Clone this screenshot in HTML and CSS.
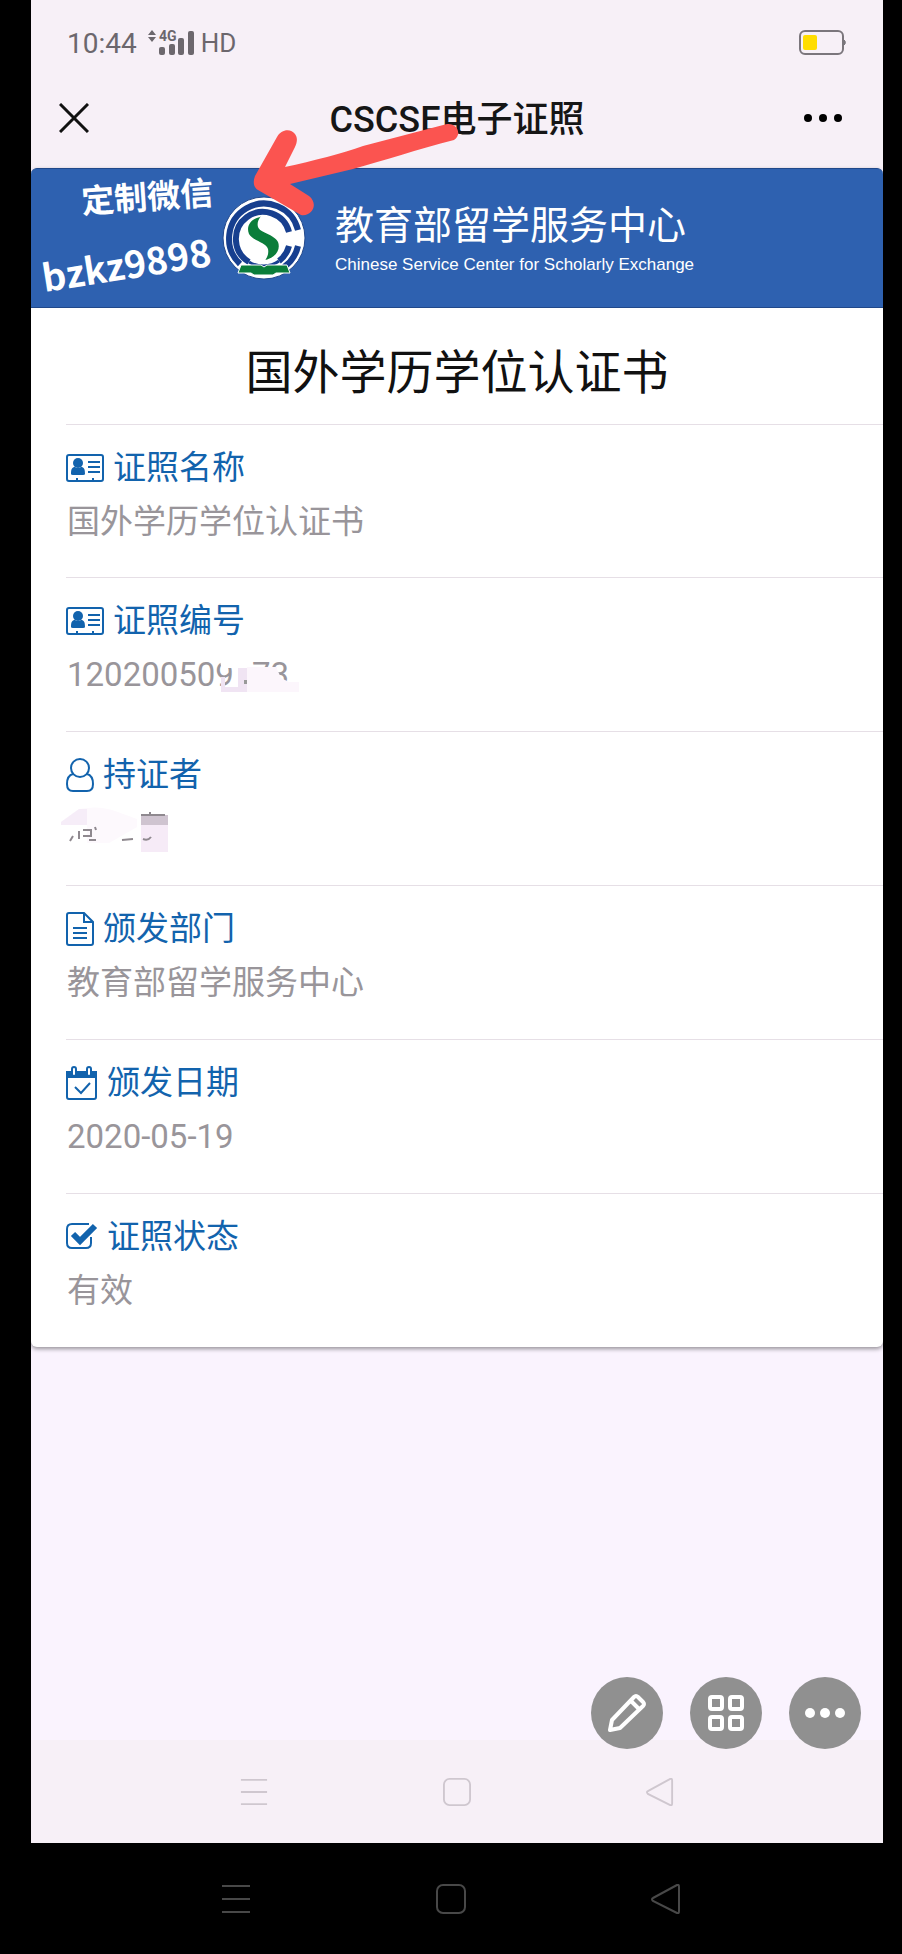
FILE: index.html
```
<!DOCTYPE html>
<html lang="zh-CN">
<head>
  <meta charset="UTF-8" />
  <meta name="viewport" content="width=device-width, initial-scale=1.0"/>
  <title>CSCSE电子证照</title>
  <link rel="stylesheet" href="styles.css">
</head>
<body>

  <div class="screen">
    <header class="top">
      <div class="status-bar">
        <span class="time">10:44</span>
        <svg class="signal" width="48" height="28" viewBox="0 0 48 28" fill="currentColor" aria-hidden="true">
          <path d="M1 8l4-5 4 5zM1 10l4 5 4-5z"/>
          <text x="12" y="14" class="net">4G</text>
          <rect x="12" y="20" width="6" height="8" rx="2"/>
          <rect x="22" y="17" width="6" height="11" rx="2"/>
          <rect x="31" y="11" width="6" height="17" rx="2"/>
          <rect x="41" y="4" width="6" height="24" rx="2"/>
        </svg>
        <span class="hd">HD</span>
        <svg class="battery" width="48" height="26" viewBox="0 0 48 26" aria-hidden="true">
          <rect x="1" y="1" width="43" height="23" rx="5" fill="none" stroke="#7b767c" stroke-width="2"/>
          <rect x="4" y="5" width="14" height="15" rx="2" fill="#ffdd00"/>
          <path d="M45 10a3 3 0 0 1 0 5z" fill="#7b767c" stroke="#7b767c"/>
        </svg>
      </div>

      <div class="title-bar">
        <button class="icon-btn" aria-label="关闭">
          <svg width="30" height="30" viewBox="0 0 30 30"><path d="M1 1l28 28M29 1L1 29" stroke="#111" stroke-width="3" fill="none"/></svg>
        </button>
        <h1>CSCSE电子证照</h1>
        <button class="icon-btn icon-btn-end" aria-label="更多">
          <svg width="40" height="30" viewBox="0 0 40 30"><circle cx="5" cy="15" r="4"/><circle cx="20" cy="15" r="4"/><circle cx="35" cy="15" r="4"/></svg>
        </button>
      </div>
    </header>

    <main class="card">
      <div class="banner">
        <svg class="logo" width="84" height="84" viewBox="0 0 84 84" fill="none" aria-hidden="true">
          <circle cx="42" cy="42" r="41" fill="#fff" stroke="#24498c"/>
          <g stroke="#173f8f" stroke-width="6">
            <path d="M76 34A35 35 0 1 0 18 68"/>
            <path d="M76 50A35 35 0 0 1 62 71"/>
            <path d="M67 36A27 27 0 1 0 27 66"/>
            <path d="M67 50A27 27 0 0 1 57 65"/>
            <path d="M27 66A27 27 0 0 0 57 65" stroke-width="3"/>
          </g>
          <path d="M38 21C28 23 24 31 27 38C31 45 44 46 46 53C47 58 45 62 43 64C53 62 59 54 56 46C52 38 38 37 36 31C35 27 36 24 39 20Z" fill="#0b7d3a"/>
          <path d="M19 69h20l3 2 3-2h20l3 8H54l-3 2H32l-3-2H16z" fill="#0b7d3a" stroke="#fff"/>
        </svg>
        <div class="org">
          <p class="org-cn">教育部留学服务中心</p>
          <p class="org-en">Chinese Service Center for Scholarly Exchange</p>
        </div>
        <span class="stamp stamp-cn">定制微信</span>
        <span class="stamp stamp-id">bzkz9898</span>
        <svg class="arrow" width="210" height="96" viewBox="0 0 210 96" aria-hidden="true">
          <path d="M24 14C28 6 38 5 42 11C45 15 44 20 42 24L32 44C60 38 90 30 110 23L194 1C205 0 209 12 201 17C165 26 130 38 100 46L37 61L56 73C66 81 59 94 48 92L5 67C0 64 0 58 2 53Z" fill="#fb5450"/>
        </svg>
      </div>

      <h2 class="doc-title">国外学历学位认证书</h2>

      <section class="row">
        <h3>
          <svg width="38" height="30" viewBox="0 0 38 30" fill="none" stroke="currentColor" stroke-width="2" aria-hidden="true">
            <rect x="1" y="2" width="36" height="26" rx="2"/>
            <path d="M22 9h12M22 14h12M22 19h12M11 28v-3M27 28v-3"/>
            <circle cx="12" cy="10" r="5" fill="currentColor" stroke="none"/>
            <path d="M5 21c0-5 1-7 4-7q3 2 6 0c3 0 4 2 4 7q0 1-2 1H7q-2 0-2-1z" fill="currentColor" stroke="none"/>
          </svg>
          证照名称
        </h3>
        <p>国外学历学位认证书</p>
      </section>

      <section class="row">
        <h3>
          <svg width="38" height="30" viewBox="0 0 38 30" fill="none" stroke="currentColor" stroke-width="2" aria-hidden="true">
            <rect x="1" y="2" width="36" height="26" rx="2"/>
            <path d="M22 9h12M22 14h12M22 19h12M11 28v-3M27 28v-3"/>
            <circle cx="12" cy="10" r="5" fill="currentColor" stroke="none"/>
            <path d="M5 21c0-5 1-7 4-7q3 2 6 0c3 0 4 2 4 7q0 1-2 1H7q-2 0-2-1z" fill="currentColor" stroke="none"/>
          </svg>
          证照编号
        </h3>
        <div class="masked">
          <p>120200509<span class="tail">73</span></p>
          <svg class="mask mask-number" width="80" height="34" viewBox="0 0 80 34" aria-hidden="true">
            <path d="M0 0h27v8H8v5l-6-1z" fill="#fff"/>
            <path d="M1 17h4v15H1zM18 8h9v24h-9z" fill="#f0e4f3"/>
            <path d="M5 27h14v5H1v-3z" fill="#f0e4f3"/>
            <path d="M27 7h30v2l4 9 8 4h10v10H27z" fill="#fcf6fc"/>
            <path d="M24 20h3v4h-3z" fill="#999"/>
          </svg>
        </div>
      </section>

      <section class="row">
        <h3>
          <svg width="28" height="34" viewBox="0 0 28 34" fill="none" stroke="currentColor" stroke-width="2" aria-hidden="true">
            <circle cx="14" cy="10" r="9"/>
            <path d="M7 16C3 17 1 21 1 26c0 4 2 7 6 7h14c4 0 6-3 6-7 0-5-2-9-6-10"/>
          </svg>
          持证者
        </h3>
        <div class="masked">
          <p></p>
          <svg class="mask mask-name" width="110" height="48" viewBox="0 0 110 48" fill="none" aria-hidden="true">
            <path d="M0 15L18 2q20-4 36 2l22 8v8L48 36H26V18H0z" fill="#fdf9fd"/>
            <path d="M0 15L18 2h8v16H0z" fill="#f6edf8"/>
            <path d="M80 8h27v10H80z" fill="#cfc4d0"/>
            <path d="M80 18h27v27H80z" fill="#f6ebf7"/>
            <path d="M80 8h24M89 5v3M9 34l3-5M18 24v8M22 23h8v6h-8M28 33h7M34 20l1 3M61 33l11-1M82 32q5 2 8-2" stroke="#8f898f" stroke-width="2"/>
          </svg>
        </div>
      </section>

      <section class="row">
        <h3>
          <svg width="28" height="34" viewBox="0 0 28 34" fill="none" stroke="currentColor" stroke-width="2" aria-hidden="true">
            <path d="M3 1h15l9 9v21q0 2-2 2H3q-2 0-2-2V3q0-2 2-2zM18 1v9h9M7 16h14M7 21h14M7 26h14"/>
          </svg>
          颁发部门
        </h3>
        <p>教育部留学服务中心</p>
      </section>

      <section class="row">
        <h3>
          <svg width="32" height="34" viewBox="0 0 32 34" fill="none" stroke="currentColor" stroke-width="2" aria-hidden="true">
            <rect x="1" y="6" width="29" height="27" rx="2"/>
            <path d="M1 6h29v5H1z" fill="currentColor"/>
            <rect x="6" y="1" width="4" height="9" rx="2" fill="#fff"/>
            <rect x="21" y="1" width="4" height="9" rx="2" fill="#fff"/>
            <path d="M9 21l6 6 9-10"/>
          </svg>
          颁发日期
        </h3>
        <p>2020-05-19</p>
      </section>

      <section class="row">
        <h3>
          <svg width="32" height="30" viewBox="0 0 32 30" fill="none" stroke="currentColor" stroke-width="2" aria-hidden="true">
            <path d="M23 2H6Q1 2 1 7v14q0 5 5 5h14q5 0 5-5v-6"/>
            <path d="M7 12l7 7L29 4" stroke-width="6"/>
          </svg>
          证照状态
        </h3>
        <p>有效</p>
      </section>
    </main>

    <div class="fabs">
      <button class="fab" aria-label="编辑">
        <svg width="40" height="40" viewBox="0 0 40 40" fill="none" stroke="#fff" stroke-width="4" stroke-linejoin="round">
          <path d="M3 37l2-10L27 4q2-2 4 0l5 5q2 2 0 4L13 35zM24 8l8 8"/>
        </svg>
      </button>
      <button class="fab" aria-label="应用">
        <svg width="40" height="40" viewBox="0 0 40 40" fill="none" stroke="#fff" stroke-width="4">
          <rect x="4" y="4" width="12" height="12" rx="2"/>
          <rect x="24" y="4" width="12" height="12" rx="2"/>
          <rect x="4" y="24" width="12" height="12" rx="2"/>
          <rect x="24" y="24" width="12" height="12" rx="2"/>
        </svg>
      </button>
      <button class="fab" aria-label="更多操作">
        <svg width="40" height="40" viewBox="0 0 40 40" fill="#fff"><circle cx="5" cy="20" r="5"/><circle cx="20" cy="20" r="5"/><circle cx="35" cy="20" r="5"/></svg>
      </button>
    </div>

    <nav class="keys keys-light">
      <button aria-label="菜单"><svg viewBox="0 0 30 30"><path d="M1 2h28M1 15h28M1 28h28"/></svg></button>
      <button aria-label="主页"><svg viewBox="0 0 30 30"><rect x="1" y="1" width="28" height="28" rx="6"/></svg></button>
      <button aria-label="返回"><svg viewBox="0 0 30 30"><path d="M26 1q2-1 2 2v24q0 3-2 2L2 17q-2-2 0-3z"/></svg></button>
    </nav>
  </div>

  <nav class="keys keys-dark">
    <button aria-label="菜单"><svg viewBox="0 0 30 30"><path d="M1 2h28M1 15h28M1 28h28"/></svg></button>
    <button aria-label="主页"><svg viewBox="0 0 30 30"><rect x="1" y="1" width="28" height="28" rx="6"/></svg></button>
    <button aria-label="返回"><svg viewBox="0 0 30 30"><path d="M26 1q2-1 2 2v24q0 3-2 2L2 17q-2-2 0-3z"/></svg></button>
  </nav>

</body>
</html>
```
FILE: styles.css
```
* {
  box-sizing: border-box;
}

body {
  margin: 0;
  min-height: 100vh;
  display: flex;
  flex-direction: column;
  background: #000;
  font-family: Roboto, "Noto Sans CJK SC", sans-serif;
}

h1, h2, h3, p {
  margin: 0;
  font-weight: 400;
}

button {
  padding: 0;
  border: none;
  background: none;
  display: flex;
  align-items: center;
  justify-content: center;
  cursor: pointer;
}

svg {
  display: block;
  flex-shrink: 0;
}

.screen {
  flex: 1;
  display: flex;
  flex-direction: column;
  position: relative;
  margin: 0 19px 0 31px;
  background: #faf3fe;
}

/* header */
.top {
  background: #f7f0f7;
}

.status-bar {
  display: flex;
  align-items: center;
  height: 86px;
  padding: 0 36px;
  color: #6c676d;
  font-size: 28px;
}

.signal {
  margin: 0 6px 4px 10px;
}

.net {
  font-size: 14px;
  font-weight: 700;
}

.hd {
  font-size: 26px;
}

.battery {
  margin-left: auto;
}

.title-bar {
  display: grid;
  grid-template-columns: 1fr auto 1fr;
  align-items: center;
  height: 82px;
  padding: 0 40px 18px 28px;
}

.title-bar h1 {
  padding: 4px 0 0 12px;
  font-size: 36px;
  font-weight: 500;
  line-height: 48px;
  color: #161616;
}

.icon-btn {
  justify-self: start;
  height: 48px;
}

.icon-btn-end {
  justify-self: end;
}

/* card */
.card {
  background: #fff;
  border-radius: 6px;
  box-shadow: 0 2px 4px rgba(0, 0, 0, 0.4);
}

.banner {
  position: relative;
  display: flex;
  align-items: center;
  gap: 29px;
  height: 140px;
  padding-left: 191px;
  background: #2e61b0;
  border-top: 1px solid #20488a;
  border-bottom: 1px solid #20488a;
  border-radius: 6px 6px 0 0;
  color: #fff;
}

.org-cn {
  font-size: 39px;
  line-height: 44px;
  font-family: "Noto Sans CJK SC", sans-serif;
}

.org-en {
  margin-top: 9px;
  font-size: 17px;
  line-height: 24px;
  font-family: "Liberation Sans", sans-serif;
}

.stamp {
  position: absolute;
  font-family: "Noto Sans CJK SC", sans-serif;
  font-weight: 700;
  line-height: 48px;
}

.stamp-cn {
  top: 2px;
  left: 50px;
  font-size: 33px;
  transform: rotate(-4deg);
}

.stamp-id {
  top: 70px;
  left: 10px;
  font-size: 37px;
  transform: rotate(-9deg);
}

.arrow {
  position: absolute;
  top: -46px;
  left: 222px;
}

.doc-title {
  padding: 37px 0 23px;
  font-size: 47px;
  line-height: 56px;
  text-align: center;
  color: #111;
}

.row {
  margin-left: 35px;
  padding: 21px 0 33px;
  border-top: 1px solid #e6dfe6;
}

.row h3 {
  display: flex;
  align-items: center;
  gap: 9px;
  font-size: 33px;
  line-height: 44px;
  color: #1263ad;
}

.row p {
  min-height: 44px;
  margin-top: 10px;
  padding-left: 1px;
  font-size: 33px;
  line-height: 44px;
  color: #99959a;
}

.row + .row {
  padding-bottom: 34px;
}

.tail {
  margin-left: 18px;
}

/* smudges over the private values */
.masked {
  position: relative;
}

.mask {
  position: absolute;
}

.mask-number {
  top: 7px;
  left: 154px;
}

.mask-name {
  top: 0;
  left: -5px;
}

/* floating buttons */
.fabs {
  position: absolute;
  right: 22px;
  bottom: 94px;
  display: flex;
  gap: 27px;
}

.fab {
  width: 72px;
  height: 72px;
  border-radius: 50%;
  background: #909090;
}

/* system keys */
.keys {
  display: flex;
  align-items: center;
  justify-content: center;
}

.keys svg {
  width: 100%;
  fill: none;
  stroke: currentColor;
  stroke-width: 2;
}

.keys-light {
  gap: 175px;
  height: 103px;
  margin-top: auto;
  background: #f7f0f7;
  color: #cfc7cf;
}

.keys-light button {
  width: 28px;
  color: inherit;
}

.keys-dark {
  gap: 185px;
  height: 111px;
  color: #484848;
}

.keys-dark button {
  width: 30px;
  color: inherit;
}
```
